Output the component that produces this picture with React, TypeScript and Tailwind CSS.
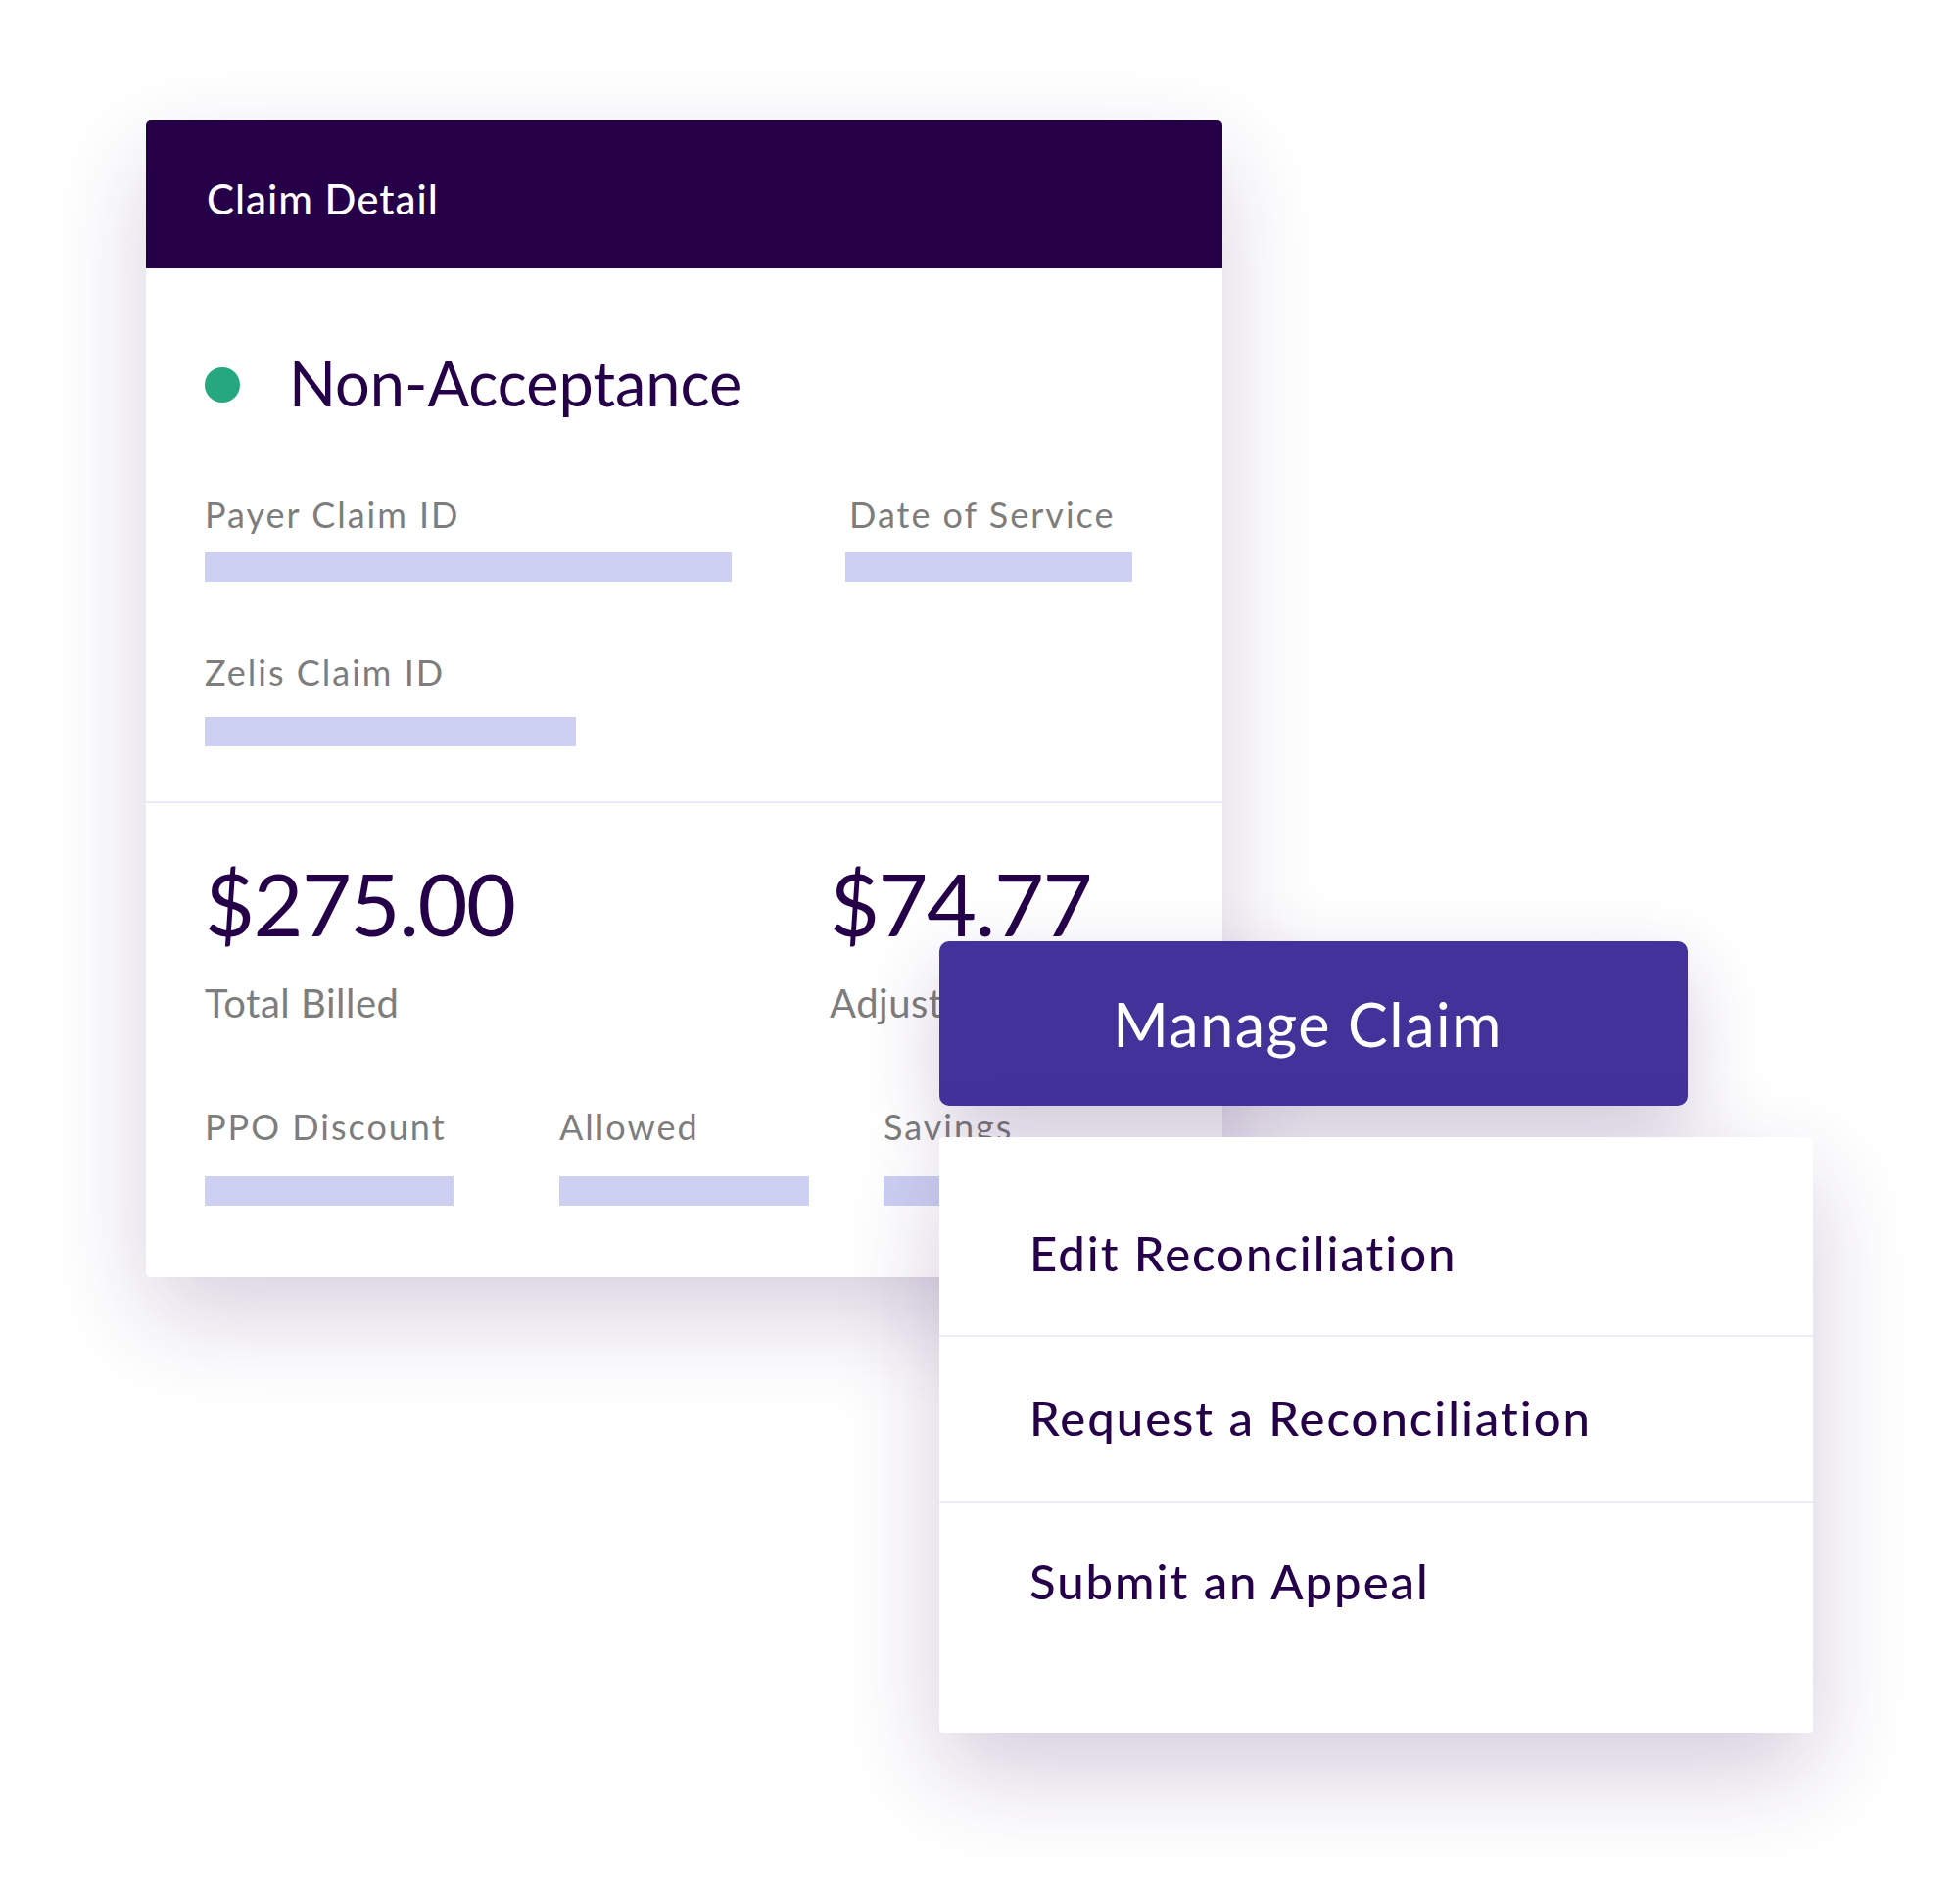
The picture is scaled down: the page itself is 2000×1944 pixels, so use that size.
const font = { fontFamily: 'Lato, "Noto Sans", sans-serif' };

function Bar({ w }: { w: string }) {
  return <div className={`h-[30px] bg-[#cdd0f2] ${w}`} />;
}

function Label({ children, className = '' }: { children: React.ReactNode; className?: string }) {
  return (
    <div className={`text-[36px] leading-none tracking-[2px] text-[#7d7d7d] ${className}`}>{children}</div>
  );
}

export default function App() {
  return (
    <div className="relative w-[2000px] h-[1944px] bg-white overflow-hidden" style={font}>
      <div className="pt-[123px] pl-[149px]">
        {/* claim card */}
        <div className="w-[1099px] rounded-[5px] bg-white shadow-[0_40px_100px_rgba(55,25,95,0.2)] overflow-hidden">
          <div className="h-[151px] bg-[#250049] pl-[62px] pt-[59px]">
            <div className="text-[42px] leading-none font-medium tracking-[1px] text-white">Claim Detail</div>
          </div>

          <div className="px-[60px]">
            <div className="mt-[85px] flex items-center gap-[50px]">
              <div className="w-[36px] h-[36px] rounded-full bg-[#25a87d] mt-[4px]" />
              <div className="text-[63px] leading-none text-[#250049]">Non-Acceptance</div>
            </div>

            <div className="mt-[85px] grid grid-cols-[654px_1fr]">
              <div>
                <Label>Payer Claim ID</Label>
                <div className="mt-[21px]">
                  <Bar w="w-[538px]" />
                </div>
              </div>
              <div>
                <Label className="pl-[4px]">Date of Service</Label>
                <div className="mt-[21px]">
                  <Bar w="w-[293px]" />
                </div>
              </div>
            </div>

            <div className="mt-[74px]">
              <Label>Zelis Claim ID</Label>
              <div className="mt-[28px]">
                <Bar w="w-[379px]" />
              </div>
            </div>
          </div>

          <div className="mt-[56px] h-[2px] bg-[#ece9fb]" />

          <div className="px-[60px] pb-[73px]">
            <div className="mt-[58px] grid grid-cols-[638px_1fr] text-[88px] leading-none tracking-[-1.5px] text-[#250049]">
              <div>$275.00</div>
              <div>$74.77</div>
            </div>
            <div className="mt-[38px] grid grid-cols-[638px_1fr] text-[40px] leading-none tracking-[0.5px] text-[#7d7d7d]">
              <div>Total Billed</div>
              <div>Adjustment</div>
            </div>

            <div className="mt-[88px] grid grid-cols-[362px_331px_1fr]">
              <div>
                <Label>PPO Discount</Label>
                <div className="mt-[33px]">
                  <Bar w="w-[254px]" />
                </div>
              </div>
              <div>
                <Label>Allowed</Label>
                <div className="mt-[33px]">
                  <Bar w="w-[255px]" />
                </div>
              </div>
              <div>
                <Label>Savings</Label>
                <div className="mt-[33px]">
                  <Bar w="w-[254px]" />
                </div>
              </div>
            </div>
          </div>
        </div>
      </div>

      {/* manage claim menu, lying over the card */}
      <div className="absolute left-[959px] top-[961px] w-[892px]">
        <div className="w-[764px] h-[168px] rounded-[10px] bg-[#42329a] flex items-center justify-center shadow-[0_30px_80px_rgba(55,25,95,0.22)]">
          <span className="text-[61px] leading-none tracking-[1.5px] text-white -ml-[12px]">Manage Claim</span>
        </div>
        <div className="mt-[32px] h-[608px] rounded-[4px] bg-white flex flex-col text-[49px] leading-none font-medium tracking-[2px] text-[#250049] shadow-[0_40px_100px_rgba(55,25,95,0.22)]">
          <div className="h-[202px] pl-[92px] pt-[94px]">Edit Reconciliation</div>
          <div className="h-[170px] border-t-2 border-[#eeebfb] pl-[92px] pt-[58px]">Request a Reconciliation</div>
          <div className="flex-1 border-t-2 border-[#eeebfb] pl-[92px] pt-[55px]">Submit an Appeal</div>
        </div>
      </div>
    </div>
  );
}
